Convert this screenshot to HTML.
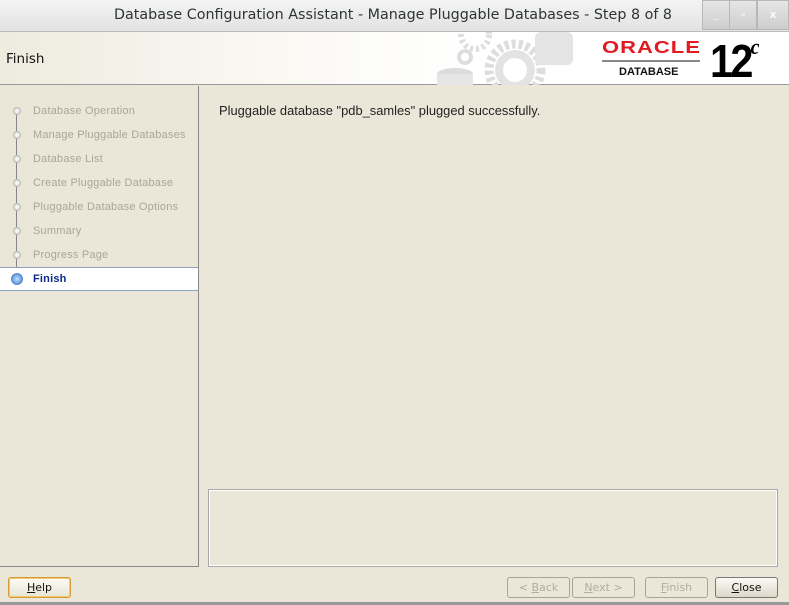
<!DOCTYPE html>
<html><head><style>
*{margin:0;padding:0;box-sizing:border-box}
body{width:789px;height:605px;background:#ebe7d8;font-family:"Liberation Sans",sans-serif;position:relative;overflow:hidden}
.title{position:absolute;left:0;top:0;width:789px;height:32px;background:linear-gradient(#f4f4f4,#e2e2e2);border-bottom:1px solid #bdbdbd}
.title span{position:absolute;left:114px;top:7px;font-family:"DejaVu Sans",sans-serif;font-size:14.3px;color:#2e3436}
.wb{position:absolute;top:0;height:30px;width:28px;background:linear-gradient(#e6e6e6,#cdcdcd);border:1px solid #b8b8b8;color:#fff;font-size:11px;text-align:center;line-height:28px;font-weight:bold}
.hdr{position:absolute;left:0;top:32px;width:789px;height:53px;background:linear-gradient(90deg,#eeebdf 0%,#fbfaf6 40%,#fff 60%);border-bottom:1px solid #9a9a9a}
.hdr .t{position:absolute;left:6px;top:19px;font-family:"DejaVu Sans",sans-serif;font-size:13.5px;color:#111}
.left{position:absolute;left:0;top:86px;width:199px;height:481px;border-right:1px solid #8a8a8a;border-bottom:1px solid #8a8a8a}
.it{position:absolute;left:33px;font-size:11px;color:#a9a697;letter-spacing:.2px}
.dot{position:absolute;left:13px;width:8px;height:8px;border-radius:50%;background:radial-gradient(#fff,#ccc);border:1px solid #bbb}
.vline{position:absolute;left:16px;top:112px;width:1px;height:164px;background:#888}
.sel{position:absolute;left:0;top:267px;width:198px;height:24px;background:#fff;border-top:1px solid #8da0c6;border-bottom:1px solid #8da0c6}
.msg{position:absolute;left:219px;top:103px;font-size:12.9px;color:#222}
.box{position:absolute;left:208px;top:489px;width:570px;height:78px;border:1px solid #a9a9a9;box-shadow:inset 0 0 0 1px #fff}
.btn{position:absolute;top:577px;height:21px;border:1px solid #a7a49a;border-radius:3px;font-family:"DejaVu Sans",sans-serif;font-size:11px;text-align:center;line-height:19px;color:#b0ad9f}
</style></head><body>
<div class="title"><span>Database Configuration Assistant - Manage Pluggable Databases - Step 8 of 8</span></div>
<div class="wb" style="left:702px">_</div><div class="wb" style="left:729px">▫</div><div class="wb" style="left:757px;width:32px">x</div>
<div class="hdr"><div class="t">Finish</div>
<svg style="position:absolute;left:435px;top:0" width="160" height="53">
<circle cx="80" cy="38" r="26" fill="none" stroke="#ddd" stroke-width="9" stroke-dasharray="4 3"/>
<circle cx="80" cy="38" r="16" fill="none" stroke="#e3e3e3" stroke-width="8"/>
<circle cx="40" cy="3" r="14" fill="none" stroke="#ddd" stroke-width="6" stroke-dasharray="3 3"/>
<circle cx="30" cy="25" r="6" fill="none" stroke="#ddd" stroke-width="4"/>
<rect x="100" y="0" width="38" height="33" rx="6" fill="#e4e4e4"/>
<ellipse cx="20" cy="42" rx="18" ry="6" fill="#dcdcdc"/><rect x="2" y="42" width="36" height="12" fill="#e5e5e5"/>
</svg>
<div style="position:absolute;left:602px;top:5px;color:#e21a22;font-weight:bold;font-size:22px;letter-spacing:1px;transform:scaleY(.8);transform-origin:top left">ORACLE</div>
<div style="position:absolute;left:602px;top:28px;width:98px;height:2px;background:#888"></div>
<div style="position:absolute;left:619px;top:34px;font-weight:bold;font-size:11px;color:#111">DATABASE</div>
<div style="position:absolute;left:710px;top:2px;font-weight:bold;font-size:46px;color:#000;letter-spacing:-3px;transform:scaleX(.9);transform-origin:left">12<i style="font-size:22px;vertical-align:top;font-family:'Liberation Serif';letter-spacing:0">c</i></div>
</div>
<div class="left"></div>
<div class="vline"></div>
<div class="sel"></div>
<div class="dot" style="top:107px"></div><div class="it" style="top:105px">Database Operation</div>
<div class="dot" style="top:131px"></div><div class="it" style="top:129px">Manage Pluggable Databases</div>
<div class="dot" style="top:155px"></div><div class="it" style="top:153px">Database List</div>
<div class="dot" style="top:179px"></div><div class="it" style="top:177px">Create Pluggable Database</div>
<div class="dot" style="top:203px"></div><div class="it" style="top:201px">Pluggable Database Options</div>
<div class="dot" style="top:227px"></div><div class="it" style="top:225px">Summary</div>
<div class="dot" style="top:251px"></div><div class="it" style="top:249px">Progress Page</div>
<div class="dot" style="top:273px;left:11px;width:12px;height:12px;background:radial-gradient(#bfe0ff,#3a7fd0);border-color:#5a8ac8"></div><div class="it" style="top:273px;color:#0a2a8a;font-weight:bold">Finish</div>
<div class="msg">Pluggable database "pdb_samles" plugged successfully.</div>
<div class="box"></div>
<div class="btn" style="left:8px;width:63px;color:#111;border:1px solid #d49a3a;background:linear-gradient(#fdfcf6,#e8e4d4);box-shadow:inset 0 0 0 1px #f5c873"><u>H</u>elp</div>
<div class="btn" style="left:507px;width:63px">&lt; <u>B</u>ack</div>
<div class="btn" style="left:572px;width:63px"><u>N</u>ext &gt;</div>
<div class="btn" style="left:645px;width:63px"><u>F</u>inish</div>
<div class="btn" style="left:715px;width:63px;color:#111;border-color:#777;background:linear-gradient(#fbfaf5,#dcd8c8)"><u>C</u>lose</div>
<div style="position:absolute;left:0;top:602px;width:789px;height:3px;background:#9a9a9a"></div>
</body></html>
